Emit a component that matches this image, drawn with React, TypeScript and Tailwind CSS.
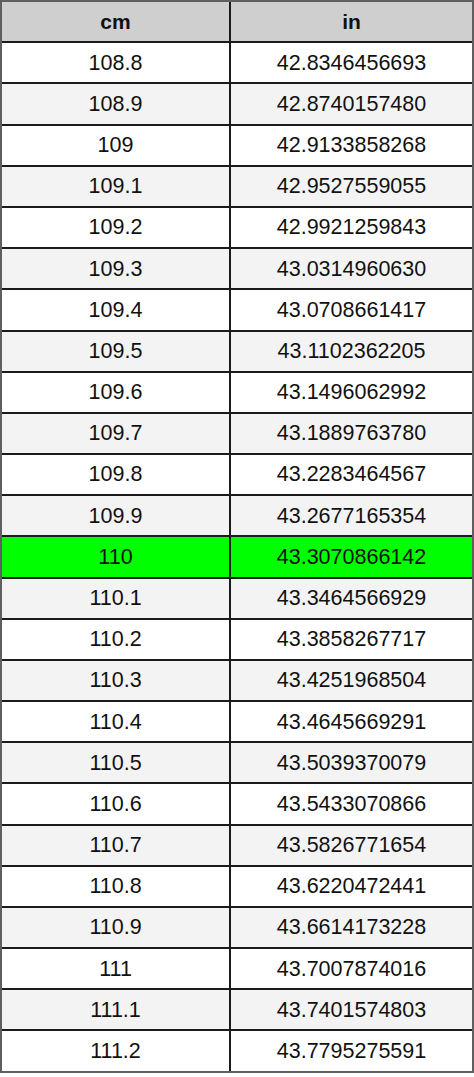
const rows: [string, string][] = [
  ["108.8", "42.8346456693"],
  ["108.9", "42.8740157480"],
  ["109", "42.9133858268"],
  ["109.1", "42.9527559055"],
  ["109.2", "42.9921259843"],
  ["109.3", "43.0314960630"],
  ["109.4", "43.0708661417"],
  ["109.5", "43.1102362205"],
  ["109.6", "43.1496062992"],
  ["109.7", "43.1889763780"],
  ["109.8", "43.2283464567"],
  ["109.9", "43.2677165354"],
  ["110", "43.3070866142"],
  ["110.1", "43.3464566929"],
  ["110.2", "43.3858267717"],
  ["110.3", "43.4251968504"],
  ["110.4", "43.4645669291"],
  ["110.5", "43.5039370079"],
  ["110.6", "43.5433070866"],
  ["110.7", "43.5826771654"],
  ["110.8", "43.6220472441"],
  ["110.9", "43.6614173228"],
  ["111", "43.7007874016"],
  ["111.1", "43.7401574803"],
  ["111.2", "43.7795275591"],
]

export default function App() {
  return (
    <div className="min-h-screen bg-white" style={{ fontFamily: '"Liberation Sans", Arial, sans-serif' }}>
      <div className="w-[474px] border-2 border-[#5f5f5f] text-[21.5px] text-[#111]">
        <div className="grid h-[39.3px] grid-cols-[229px_1fr] bg-[#cfcfcf] text-[21px] font-bold">
          <div className="flex items-center justify-center border-r-2 border-[#1b1b1b]">cm</div>
          <div className="flex items-center justify-center">in</div>
        </div>
        {rows.map(([cm, inch], i) => {
          const hl = cm === "110"
          const bg = hl ? "bg-[#00ff00]" : i % 2 === 0 ? "bg-white" : "bg-[#f3f3f3]"
          return (
            <div
              key={cm}
              className={`grid h-[41.18px] grid-cols-[229px_1fr] border-t-2 border-[#1b1b1b] ${bg}`}
            >
              <div className="flex items-center justify-center border-r-2 border-[#1b1b1b]">{cm}</div>
              <div className="flex items-center justify-center">{inch}</div>
            </div>
          )
        })}
      </div>
    </div>
  )
}
